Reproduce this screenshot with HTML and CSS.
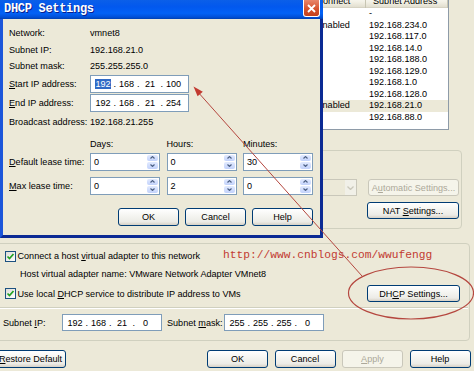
FILE: index.html
```html
<!DOCTYPE html>
<html lang="en">
<head>
    <meta charset="UTF-8">
    <meta name="viewport" content="width=device-width, initial-scale=1.0">
    <title>DHCP Settings</title>
    <link rel="stylesheet" href="styles.css">
</head>
<body>
    <!-- main window behind the dialog -->
    <div class="editor">
        <div class="netlist">
            <div class="netrow head"><span></span><span class="c-dhcp">Connect</span><span class="c-subnet">Subnet Address</span></div>
            <div class="netrow"><span></span><span class="c-dhcp"></span><span class="c-subnet">-</span></div>
            <div class="netrow"><span></span><span class="c-dhcp">Enabled</span><span class="c-subnet">192.168.234.0</span></div>
            <div class="netrow"><span></span><span class="c-dhcp"></span><span class="c-subnet">192.168.117.0</span></div>
            <div class="netrow"><span></span><span class="c-dhcp"></span><span class="c-subnet">192.168.14.0</span></div>
            <div class="netrow"><span></span><span class="c-dhcp"></span><span class="c-subnet">192.168.188.0</span></div>
            <div class="netrow"><span></span><span class="c-dhcp"></span><span class="c-subnet">192.168.129.0</span></div>
            <div class="netrow"><span></span><span class="c-dhcp"></span><span class="c-subnet">192.168.1.0</span></div>
            <div class="netrow"><span></span><span class="c-dhcp"></span><span class="c-subnet">192.168.128.0</span></div>
            <div class="netrow sel"><span></span><span class="c-dhcp">Enabled</span><span class="c-subnet">192.168.21.0</span></div>
            <div class="netrow"><span></span><span class="c-dhcp"></span><span class="c-subnet">192.168.88.0</span></div>
        </div>

        <div class="natgroup">
            <div class="natline">
                <div class="combo">
                    <span class="drop"><svg width="7" height="4" viewBox="0 0 7 4"><path d="M0.5 0.5 L3.5 3.5 L6.5 0.5" fill="none" stroke="#C9C7BA" stroke-width="1.3"/></svg></span>
                </div>
                <button class="btn btn-auto" disabled>A<u>u</u>tomatic Settings...</button>
            </div>
            <button class="btn btn-nat">NAT <u>S</u>ettings...</button>
        </div>

        <div class="hostgroup">
            <div class="opt">
                <span class="check"><svg width="9" height="9" viewBox="0 0 9 9"><path d="M1.5 4.5 L3.5 6.5 L7.5 2" fill="none" stroke="#21A121" stroke-width="1.7"/></svg></span>
                <span>Connect a host <u>v</u>irtual adapter to this network</span>
            </div>
            <div class="adapter">Host virtual adapter name: VMware Network Adapter VMnet8</div>
            <div class="opt dhcp">
                <span class="check"><svg width="9" height="9" viewBox="0 0 9 9"><path d="M1.5 4.5 L3.5 6.5 L7.5 2" fill="none" stroke="#21A121" stroke-width="1.7"/></svg></span>
                <span>Use local <u>D</u>HCP service to distribute IP address to VMs</span>
                <button class="btn btn-dhcp">DH<u>C</u>P Settings...</button>
            </div>
            <div class="sep"></div>
            <div class="subnet-row">
                <span class="s-lbl">Subnet <u>I</u>P:</span>
                <div class="field ip wide"><span class="oct">192</span><span class="dot">.</span><span class="oct">168</span><span class="dot">.</span><span class="oct">21</span><span class="dot">.</span><span class="oct">0</span></div>
                <span class="s-lbl mask">Subnet <u>m</u>ask:</span>
                <div class="field ip wide"><span class="oct">255</span><span class="dot">.</span><span class="oct">255</span><span class="dot">.</span><span class="oct">255</span><span class="dot">.</span><span class="oct">0</span></div>
            </div>
        </div>

        <div class="actions">
            <button class="btn btn-restore"><u>R</u>estore Default</button>
            <button class="btn">OK</button>
            <button class="btn">Cancel</button>
            <button class="btn" disabled><u>A</u>pply</button>
            <button class="btn">Help</button>
        </div>
    </div>

    <!-- DHCP dialog on top -->
    <div class="dialog">
        <div class="titlebar">
            <span class="title">DHCP Settings</span>
            <span class="close"><svg width="9" height="9" viewBox="0 0 9 9"><path d="M1 1 L8 8 M8 1 L1 8" stroke="#fff" stroke-width="1.8"/></svg></span>
        </div>
        <div class="dlg-body">
            <div class="row info"><span class="lbl">Network:</span><span>vmnet8</span></div>
            <div class="row info"><span class="lbl">Subnet IP:</span><span>192.168.21.0</span></div>
            <div class="row info"><span class="lbl">Subnet mask:</span><span>255.255.255.0</span></div>
            <div class="row tall">
                <span class="lbl"><u>S</u>tart IP address:</span>
                <div class="field ip"><span class="oct"><span class="hl">192</span></span><span class="dot">.</span><span class="oct">168</span><span class="dot">.</span><span class="oct">21</span><span class="dot">.</span><span class="oct">100</span></div>
            </div>
            <div class="row tall">
                <span class="lbl"><u>E</u>nd IP address:</span>
                <div class="field ip"><span class="oct">192</span><span class="dot">.</span><span class="oct">168</span><span class="dot">.</span><span class="oct">21</span><span class="dot">.</span><span class="oct">254</span></div>
            </div>
            <div class="row tall"><span class="lbl">Broadcast address:</span><span>192.168.21.255</span></div>

            <div class="row units"><span class="lbl"></span><span class="unit">Days:</span><span class="unit">Hours:</span><span class="unit">Minutes:</span></div>
            <div class="row lease">
                <span class="lbl"><u>D</u>efault lease time:</span>
                <div class="field num"><span>0</span><span class="spin"><span class="arr"><svg width="5" height="3" viewBox="0 0 5 3"><path d="M0.5 2.5 L2.5 0.6 L4.5 2.5" fill="none" stroke="#4D6185" stroke-width="1.2"/></svg></span><span class="arr"><svg width="5" height="3" viewBox="0 0 5 3"><path d="M0.5 0.5 L2.5 2.4 L4.5 0.5" fill="none" stroke="#4D6185" stroke-width="1.2"/></svg></span></span></div>
                <div class="field num"><span>0</span><span class="spin"><span class="arr"><svg width="5" height="3" viewBox="0 0 5 3"><path d="M0.5 2.5 L2.5 0.6 L4.5 2.5" fill="none" stroke="#4D6185" stroke-width="1.2"/></svg></span><span class="arr"><svg width="5" height="3" viewBox="0 0 5 3"><path d="M0.5 0.5 L2.5 2.4 L4.5 0.5" fill="none" stroke="#4D6185" stroke-width="1.2"/></svg></span></span></div>
                <div class="field num"><span>30</span><span class="spin"><span class="arr"><svg width="5" height="3" viewBox="0 0 5 3"><path d="M0.5 2.5 L2.5 0.6 L4.5 2.5" fill="none" stroke="#4D6185" stroke-width="1.2"/></svg></span><span class="arr"><svg width="5" height="3" viewBox="0 0 5 3"><path d="M0.5 0.5 L2.5 2.4 L4.5 0.5" fill="none" stroke="#4D6185" stroke-width="1.2"/></svg></span></span></div>
            </div>
            <div class="row lease">
                <span class="lbl"><u>M</u>ax lease time:</span>
                <div class="field num"><span>0</span><span class="spin"><span class="arr"><svg width="5" height="3" viewBox="0 0 5 3"><path d="M0.5 2.5 L2.5 0.6 L4.5 2.5" fill="none" stroke="#4D6185" stroke-width="1.2"/></svg></span><span class="arr"><svg width="5" height="3" viewBox="0 0 5 3"><path d="M0.5 0.5 L2.5 2.4 L4.5 0.5" fill="none" stroke="#4D6185" stroke-width="1.2"/></svg></span></span></div>
                <div class="field num"><span>2</span><span class="spin"><span class="arr"><svg width="5" height="3" viewBox="0 0 5 3"><path d="M0.5 2.5 L2.5 0.6 L4.5 2.5" fill="none" stroke="#4D6185" stroke-width="1.2"/></svg></span><span class="arr"><svg width="5" height="3" viewBox="0 0 5 3"><path d="M0.5 0.5 L2.5 2.4 L4.5 0.5" fill="none" stroke="#4D6185" stroke-width="1.2"/></svg></span></span></div>
                <div class="field num"><span>0</span><span class="spin"><span class="arr"><svg width="5" height="3" viewBox="0 0 5 3"><path d="M0.5 2.5 L2.5 0.6 L4.5 2.5" fill="none" stroke="#4D6185" stroke-width="1.2"/></svg></span><span class="arr"><svg width="5" height="3" viewBox="0 0 5 3"><path d="M0.5 0.5 L2.5 2.4 L4.5 0.5" fill="none" stroke="#4D6185" stroke-width="1.2"/></svg></span></span></div>
            </div>

            <div class="dlg-buttons">
                <button class="btn">OK</button>
                <button class="btn">Cancel</button>
                <button class="btn">Help</button>
            </div>
        </div>
    </div>

    <!-- red annotation drawn over the screenshot -->
    <div class="url">http://www.cnblogs.com/wwufengg</div>
    <svg class="marks" width="474" height="371" viewBox="0 0 474 371">
        <line x1="197" y1="91" x2="362" y2="276" stroke="#B5473F" stroke-width="1"/>
        <polygon points="193.5,86.5 202.8,91.7 197.6,96.3" fill="#C23A30"/>
        <ellipse cx="411" cy="293" rx="62.5" ry="26" fill="none" stroke="#B5473F" stroke-width="1.2"/>
    </svg>
</body>
</html>
```

FILE: styles.css
```css
* {
    box-sizing: border-box;
}
html, body {
    margin: 0;
    padding: 0;
}
body {
    position: relative;
    width: 474px;
    height: 371px;
    overflow: hidden;
    background: #ECE9D8;
    font-family: "Liberation Sans", Arial, sans-serif;
    font-size: 9.1px;
    color: #000;
    white-space: nowrap;
}
u {
    text-decoration: underline;
    text-underline-offset: 1px;
}

/* main window */
.editor {
    width: 474px;
}
.netlist {
    width: 449px;
    height: 130px;
    overflow: hidden;
    background: #fff;
    border-right: 1px solid #8E9BA8;
    border-bottom: 1px solid #8E9BA8;
}
.netrow {
    display: grid;
    grid-template-columns: 313px 52px 1fr;
    height: 11.56px;
    line-height: 11.56px;
}
.netrow .c-dhcp {
    padding-left: 3.5px;
}
.netrow .c-subnet {
    padding-left: 4px;
}
.netrow.head {
    height: 14px;
    line-height: 14px;
    margin-top: -6px;
    background: linear-gradient(#FFFFFF, #F3F1E6 60%, #E2DFCF);
    border-bottom: 1px solid #D6D2C2;
}
.netrow.head .c-subnet {
    padding-left: 7px;
    border-left: 1px solid #C7C5B2;
    border-right: 1px solid #C7C5B2;
}
.netrow.sel {
    background: #ECE9D8;
}

.natgroup {
    display: flex;
    flex-direction: column;
    align-items: flex-end;
    margin: 20px 0 0 200px;
    width: 262px;
    height: 79px;
    padding: 28px 2px 0 0;
    border: 1px solid #D0D0BF;
    border-radius: 4px;
}
.natline {
    display: flex;
    align-items: center;
    gap: 11px;
}
.combo {
    display: flex;
    justify-content: flex-end;
    width: 130px;
    height: 17px;
    border: 1px solid #C9C7BA;
    background: #ECE9D8;
}
.drop {
    display: flex;
    align-items: center;
    justify-content: center;
    width: 11px;
    background: #F1F0E8;
}
.btn-auto {
    width: 91px;
}
.btn-nat {
    width: 92px;
    margin-top: 6px;
}

.hostgroup {
    margin: 14px 0 0 -5px;
    width: 475px;
    height: 98px;
    padding: 5px 0 0 9px;
    border: 1px solid #D0D0BF;
    border-radius: 4px;
}
.opt {
    display: flex;
    align-items: center;
    gap: 1.5px;
    height: 14px;
}
.check {
    display: flex;
    align-items: center;
    justify-content: center;
    width: 11px;
    height: 11px;
    border: 1px solid #1C5180;
    background: linear-gradient(135deg, #DCDCD7, #FFFFFF);
}
.adapter {
    height: 14px;
    line-height: 14px;
    margin-top: 4px;
    padding-left: 15px;
}
.opt.dhcp {
    height: 17px;
    margin-top: 4px;
}
.btn-dhcp {
    width: 93px;
    margin: 0 9px 0 auto;
}
.sep {
    height: 1px;
    margin: 5px 1px 0 -9px;
    background: #D0D0BF;
    box-shadow: 0 1px 0 #FFFFFF;
}
.subnet-row {
    display: flex;
    align-items: center;
    height: 17px;
    margin: 6px 0 0 -2px;
}
.s-lbl {
    flex: none;
    width: 59px;
}
.s-lbl.mask {
    width: 57px;
    margin-left: 5px;
}

.actions {
    display: flex;
    gap: 6.5px;
    margin-top: 9px;
    padding-right: 3.5px;
}
.actions .btn {
    width: 61px;
    height: 18px;
}
.actions .btn-restore {
    width: 71px;
    margin: 0 auto 0 -5px;
}

/* controls */
.btn {
    flex: none;
    height: 17px;
    padding: 0;
    border: 1px solid #003C74;
    border-radius: 3px;
    background: linear-gradient(#FFFFFF, #F4F4F0 45%, #ECEBE6 80%, #D6D0C5);
    font: inherit;
    color: #000;
    text-align: center;
}
.btn:disabled {
    border-color: #C9C7BA;
    background: #F5F4EA;
    color: #ACA899;
}
.field {
    flex: none;
    display: flex;
    align-items: center;
    height: 18px;
    border: 1px solid #7F9DB9;
    background: #fff;
}
.field.ip {
    width: 99px;
    padding-left: 2px;
}
.field.ip.wide {
    width: 100px;
    height: 17px;
}
.oct {
    width: 20px;
    text-align: center;
}
.dot {
    width: 3.5px;
    text-align: center;
}
.hl {
    background: #316AC5;
    color: #fff;
}
.field.num {
    width: 70px;
    padding: 1px 1px 1px 3px;
    justify-content: space-between;
}
.spin {
    display: flex;
    flex-direction: column;
    width: 11px;
    height: 100%;
    gap: 1px;
}
.arr {
    flex: 1;
    display: flex;
    align-items: center;
    justify-content: center;
    border-radius: 2px;
    background: linear-gradient(#E2EAFE, #C2D2FB);
}

/* dialog */
.dialog {
    position: absolute;
    left: 0;
    top: 0;
    display: flex;
    flex-direction: column;
    width: 323px;
    height: 238px;
}
.titlebar {
    display: flex;
    justify-content: space-between;
    height: 19px;
    padding: 0 3px 0 4px;
    background: linear-gradient(#0B5FE8, #0258EE 35%, #0262F6 70%, #0050D8 90%, #0040B0);
}
.title {
    font-family: "Liberation Mono", "DejaVu Sans Mono", monospace;
    font-weight: bold;
    font-size: 12px;
    letter-spacing: -0.3px;
    line-height: 18px;
    color: #fff;
    text-shadow: 1px 1px 0 #0A1E8C;
}
.close {
    display: flex;
    align-items: center;
    justify-content: center;
    width: 17px;
    height: 17px;
    border: 1px solid #fff;
    border-top: none;
    border-radius: 0 0 3px 3px;
    background: linear-gradient(#E8866A, #D6532D 55%, #C4411C);
}
.dlg-body {
    flex: 1;
    padding: 6px 7px 0 6px;
    background: #ECE9D8;
    border-left: 3px solid #1C56DA;
    border-right: 3px solid #0B2A94;
    border-bottom: 3px solid #0B2A94;
}
.row {
    display: flex;
    align-items: center;
}
.row.info {
    height: 16.5px;
}
.row.tall {
    height: 19px;
}
.lbl {
    flex: none;
    width: 81px;
}
.row.units {
    height: 14px;
    margin-top: 5.5px;
    gap: 6.5px;
}
.unit {
    width: 70px;
}
.row.lease {
    height: 18px;
    gap: 6.5px;
    margin-top: 1.5px;
}
.row.lease + .row.lease {
    margin-top: 6px;
}
.row.lease .lbl,
.row.units .lbl {
    margin-right: -6.5px;
}
.dlg-buttons {
    display: flex;
    justify-content: flex-end;
    gap: 6px;
    margin-top: 13.5px;
}
.dlg-buttons .btn {
    width: 61px;
    height: 18px;
}

/* annotation */
.url {
    position: absolute;
    left: 223px;
    top: 248px;
    font-family: "Liberation Mono", "DejaVu Sans Mono", monospace;
    font-size: 11.25px;
    line-height: 14px;
    color: #C23B32;
}
.marks {
    position: absolute;
    left: 0;
    top: 0;
    pointer-events: none;
}
```
